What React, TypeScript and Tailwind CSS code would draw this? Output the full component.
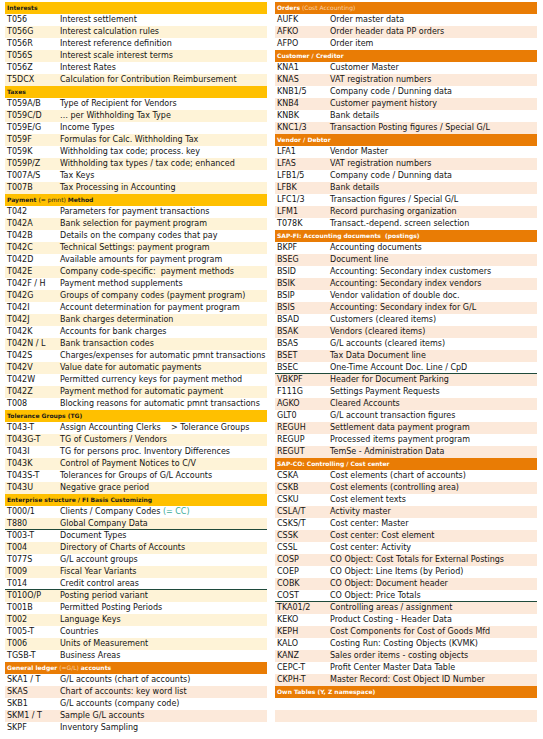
import React from "react";

type Row = [string, React.ReactNode, boolean?];
type Section = { theme: "y" | "o"; title: React.ReactNode; rows: Row[] };

const left: Section[] = [
  {
    theme: "y",
    title: <b>Interests</b>,
    rows: [
      ["T056", "Interest settlement"],
      ["T056G", "Interest calculation rules"],
      ["T056R", "Interest reference definition"],
      ["T056S", "Interest scale interest terms"],
      ["T056Z", "Interest Rates"],
      ["T5DCX", "Calculation for Contribution Reimbursement"],
    ],
  },
  {
    theme: "y",
    title: <b>Taxes</b>,
    rows: [
      ["T059A/B", "Type of Recipient for Vendors"],
      ["T059C/D", "… per Withholding Tax Type"],
      ["T059E/G", "Income Types"],
      ["T059F", "Formulas for Calc. Withholding Tax"],
      ["T059K", "Withholding tax code; process. key"],
      ["T059P/Z", "Withholding tax types / tax code; enhanced"],
      ["T007A/S", "Tax Keys"],
      ["T007B", "Tax Processing in Accounting"],
    ],
  },
  {
    theme: "y",
    title: (
      <>
        <b>Payment</b> <span className="font-normal">(= pmnt)</span> <b>Method</b>
      </>
    ),
    rows: [
      ["T042", "Parameters for payment transactions"],
      ["T042A", "Bank selection for payment program"],
      ["T042B", "Details on the company codes that pay"],
      ["T042C", "Technical Settings: payment program"],
      ["T042D", "Available amounts for payment program"],
      ["T042E", "Company code-specific:  payment methods"],
      ["T042F / H", "Payment method supplements"],
      ["T042G", "Groups of company codes (payment program)"],
      ["T042I", "Account determination for payment program"],
      ["T042J", "Bank charges determination"],
      ["T042K", "Accounts for bank charges"],
      ["T042N / L", "Bank transaction codes"],
      ["T042S", "Charges/expenses for automatic pmnt transactions"],
      ["T042V", "Value date for automatic payments"],
      ["T042W", "Permitted currency keys for payment method"],
      ["T042Z", "Payment method for automatic payment"],
      ["T008", "Blocking reasons for automatic pmnt transactions"],
    ],
  },
  {
    theme: "y",
    title: <b>Tolerance Groups (TG)</b>,
    rows: [
      ["T043-T", "Assign Accounting Clerks    > Tolerance Groups"],
      ["T043G-T", "TG of Customers / Vendors"],
      ["T043I", "TG for persons proc. Inventory Differences"],
      ["T043K", "Control of Payment Notices to C/V"],
      ["T043S-T", "Tolerances for Groups of G/L Accounts"],
      ["T043U", "Negative grace period"],
    ],
  },
  {
    theme: "y",
    title: <b>Enterprise structure / FI Basis Customizing</b>,
    rows: [
      [
        "T000/1",
        <>
          Clients / Company Codes <span className="text-[#3aab96]">(= CC)</span>
        </>,
      ],
      ["T880", "Global Company Data", true],
      ["T003-T", "Document Types"],
      ["T004", "Directory of Charts of Accounts"],
      ["T077S", "G/L account groups"],
      ["T009", "Fiscal Year Variants"],
      ["T014", "Credit control areas", true],
      ["T010O/P", "Posting period variant"],
      ["T001B", "Permitted Posting Periods"],
      ["T002", "Language Keys"],
      ["T005-T", "Countries"],
      ["T006", "Units of Measurement"],
      ["TGSB-T", "Business Areas"],
    ],
  },
  {
    theme: "o",
    title: (
      <>
        <b>General ledger</b> <span className="font-normal text-[#fbd3a8]">(=G/L)</span> <b>accounts</b>
      </>
    ),
    rows: [
      ["SKA1 / T", "G/L accounts (chart of accounts)"],
      ["SKAS", "Chart of accounts: key word list"],
      ["SKB1", "G/L accounts (company code)"],
      ["SKM1 / T", "Sample G/L accounts"],
      ["SKPF", "Inventory Sampling"],
    ],
  },
];

const right: Section[] = [
  {
    theme: "o",
    title: (
      <>
        <b>Orders</b> <span className="font-normal text-[#fbd3a8]">(Cost Accounting)</span>
      </>
    ),
    rows: [
      ["AUFK", "Order master data"],
      ["AFKO", "Order header data PP orders"],
      ["AFPO", "Order item"],
    ],
  },
  {
    theme: "o",
    title: <b>Customer / Creditor</b>,
    rows: [
      ["KNA1", "Customer Master"],
      ["KNAS", "VAT registration numbers"],
      ["KNB1/5", "Company code / Dunning data"],
      ["KNB4", "Customer payment history"],
      ["KNBK", "Bank details"],
      ["KNC1/3", "Transaction Posting figures / Special G/L"],
    ],
  },
  {
    theme: "o",
    title: <b>Vendor / Debtor</b>,
    rows: [
      ["LFA1", "Vendor Master"],
      ["LFAS", "VAT registration numbers"],
      ["LFB1/5", "Company code / Dunning data"],
      ["LFBK", "Bank details"],
      ["LFC1/3", "Transaction figures / Special G/L"],
      ["LFM1", "Record purchasing organization"],
      ["T078K", "Transact.-depend. screen selection"],
    ],
  },
  {
    theme: "o",
    title: <b>SAP-FI: Accounting documents  (postings)</b>,
    rows: [
      ["BKPF", "Accounting documents"],
      ["BSEG", "Document line"],
      ["BSID", "Accounting: Secondary index customers"],
      ["BSIK", "Accounting: Secondary index vendors"],
      ["BSIP", "Vendor validation of double doc."],
      ["BSIS", "Accounting: Secondary index for G/L"],
      ["BSAD", "Customers (cleared items)"],
      ["BSAK", "Vendors (cleared items)"],
      ["BSAS", "G/L accounts (cleared items)"],
      ["BSET", "Tax Data Document line"],
      ["BSEC", "One-Time Account Doc. Line / CpD", true],
      ["VBKPF", "Header for Document Parking"],
      ["F111G", "Settings Payment Requests"],
      ["AGKO", "Cleared Accounts"],
      ["GLT0", "G/L account transaction figures"],
      ["REGUH", "Settlement data payment program"],
      ["REGUP", "Processed items payment program"],
      ["REGUT", "TemSe - Administration Data"],
    ],
  },
  {
    theme: "o",
    title: <b>SAP-CO: Controlling / Cost center</b>,
    rows: [
      ["CSKA", "Cost elements (chart of accounts)"],
      ["CSKB", "Cost elements (controlling area)"],
      ["CSKU", "Cost element texts"],
      ["CSLA/T", "Activity master"],
      ["CSKS/T", "Cost center: Master"],
      ["CSSK", "Cost center: Cost element"],
      ["CSSL", "Cost center: Activity"],
      ["COSP", "CO Object: Cost Totals for External Postings"],
      ["COEP", "CO Object: Line Items (by Period)"],
      ["COBK", "CO Object: Document header"],
      ["COST", "CO Object: Price Totals", true],
      ["TKA01/2", "Controlling areas / assignment"],
      ["KEKO", "Product Costing - Header Data"],
      ["KEPH", "Cost Components for Cost of Goods Mfd"],
      ["KALO", "Costing Run: Costing Objects (KVMK)"],
      ["KANZ", "Sales order items - costing objects"],
      ["CEPC-T", "Profit Center Master Data Table"],
      ["CKPH-T", "Master Record: Cost Object ID Number"],
    ],
  },
  {
    theme: "o",
    title: <b>Own Tables (Y, Z namespace)</b>,
    rows: [
      ["", ""],
      ["", ""],
    ],
  },
];

function SectionView({ s }: { s: Section }) {
  const yellow = s.theme === "y";
  return (
    <div>
      <div
        className={
          yellow
            ? "h-[12px] leading-[12px] text-[6px] pl-[2px] whitespace-pre bg-[#ffc000] text-[#1a1a1a]"
            : "h-[12px] leading-[12px] text-[6px] pl-[2px] whitespace-pre bg-[#e97c05] text-white"
        }
      >
        {s.title}
      </div>
      {s.rows.map((r, i) => {
        const shade = i % 2 === 1;
        const bg = shade ? (yellow ? "bg-[#fef3d7]" : "bg-[#fce9da]") : "bg-white";
        const line = r[2] ? " border-b border-[#1f4a3b]" : "";
        return (
          <div key={i} className={"flex h-[12px] leading-[12px] text-[8px] text-[#141414] " + bg + line}>
            <div className="w-[55px] shrink-0 pl-[2px] whitespace-pre">{r[0]}</div>
            <div className="whitespace-pre">{r[1]}</div>
          </div>
        );
      })}
    </div>
  );
}

export default function App() {
  return (
    <div className="w-[543px] h-[739px] bg-white overflow-hidden font-['DejaVu_Sans',sans-serif]">
      <div className="flex gap-[8px] pl-[5px] pt-[2px]">
        <div className="w-[262px] shrink-0">
          {left.map((s, i) => (
            <SectionView key={i} s={s} />
          ))}
        </div>
        <div className="w-[262px] shrink-0">
          {right.map((s, i) => (
            <SectionView key={i} s={s} />
          ))}
        </div>
      </div>
    </div>
  );
}
